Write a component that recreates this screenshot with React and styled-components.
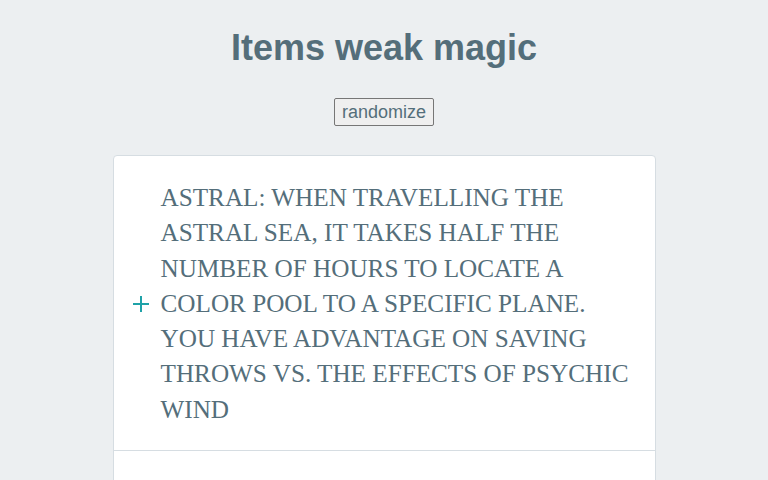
import React, { useState } from "react";
import styled, { createGlobalStyle } from "styled-components";

const items = [
  "Astral: when travelling the Astral Sea, it takes half the number of hours to locate a color pool to a specific plane. You have advantage on saving throws vs. the effects of psychic wind",
  "Aquatic: you can breathe underwater and have a swimming speed equal to your walking speed",
  "Frost: you have resistance to cold damage and can walk across ice without slipping",
  "Shadow: while in dim light or darkness you have advantage on stealth checks"
];

const GlobalStyle = createGlobalStyle`
  body {
    margin: 0;
    background: #eceff1;
    font-family: "Liberation Sans", Arial, sans-serif;
  }
`;

const Page = styled.div`
  display: flex;
  flex-direction: column;
  align-items: center;
  padding-top: 27px;
`;

const Title = styled.h1`
  margin: 0;
  font-size: 36px;
  line-height: 42px;
  font-weight: 700;
  color: #546e7a;
`;

const RandomButton = styled.button`
  margin-top: 29px;
  padding: 2px 7px;
  font-family: "Liberation Sans", Arial, sans-serif;
  font-size: 18px;
  line-height: 22px;
  color: #546e7a;
  background: #efefef;
  border: 1px solid #767676;
  border-radius: 2px;
`;

const List = styled.ul`
  list-style: none;
  margin: 29px 0 0;
  padding: 0;
  width: 543px;
  box-sizing: border-box;
  background: #fff;
  border: 1px solid #d6dde2;
  border-radius: 4px;
`;

const Row = styled.li`
  display: flex;
  align-items: center;
  gap: 12px;
  padding: 24px 20px 23px 19px;
  border-top: ${({ first }) => (first ? "none" : "1px solid #d6dde2")};
`;

const Plus = styled.svg`
  flex: none;
  width: 16px;
  height: 16px;
`;

const ItemText = styled.p`
  margin: 0;
  font-family: "Liberation Serif", "Times New Roman", serif;
  font-size: 25.2px;
  line-height: 35.3px;
  color: #546e7a;
  text-transform: uppercase;
`;

const App = () => {
  const [list, setList] = useState(items);

  const shuffle = () => {
    setList((prev) => [...prev].sort(() => Math.random() - 0.5));
  };

  return (
    <>
      <GlobalStyle />
      <Page>
        <Title>Items weak magic</Title>
        <RandomButton onClick={shuffle}>randomize</RandomButton>
        <List>
          {list.map((text, idx) => (
            <Row key={text} first={idx === 0}>
              <Plus viewBox="0 0 16 16">
                <path d="M8 0v16M0 8h16" stroke="#1fa2a8" strokeWidth="2" />
              </Plus>
              <ItemText>{text}</ItemText>
            </Row>
          ))}
        </List>
      </Page>
    </>
  );
};

export default App;
